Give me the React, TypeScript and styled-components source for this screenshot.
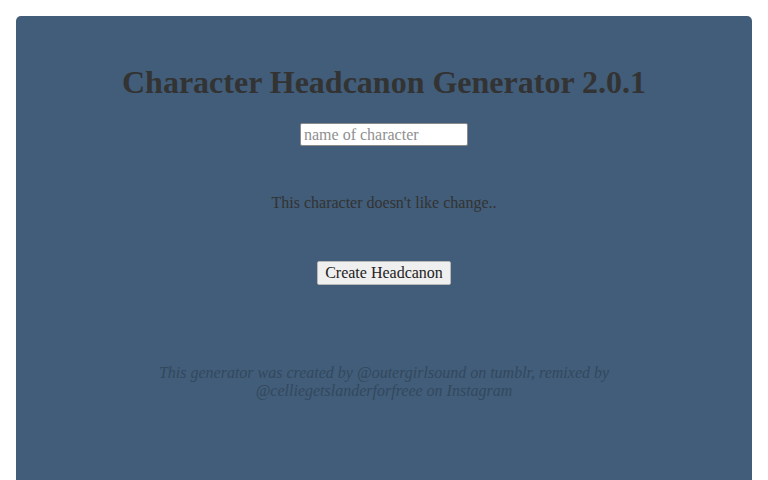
import styled, { createGlobalStyle } from "styled-components";

const GlobalStyle = createGlobalStyle`
  html, body {
    margin: 0;
    padding: 0;
    background: #ffffff;
  }

  body {
    padding: 16px 16px 0;
    font-family: "Liberation Serif", "Times New Roman", serif;
    color: #333333;
  }
`;

const Panel = styled.main`
  box-sizing: border-box;
  background-color: #415d79;
  border-radius: 5px 5px 0 0;
  min-height: calc(100vh - 16px);
  padding: 46px 24px 40px;
  display: flex;
  flex-direction: column;
  align-items: center;
  text-align: center;
`;

const Title = styled.h1`
  margin: 0;
  font-size: 32px;
  line-height: 40px;
  font-weight: bold;
  color: #333333;
`;

const NameInput = styled.input`
  margin-top: 21px;
  width: 168px;
  height: 23px;
  box-sizing: border-box;
  padding: 1px 3px;
  border: 1px solid #8a8a8a;
  border-radius: 2px;
  background: #ffffff;
  font-family: inherit;
  font-size: 16px;
  color: #333333;

  &::placeholder {
    color: #8f8f8f;
  }
`;

const Result = styled.p`
  margin: 48px 0 0;
  font-size: 16px;
  line-height: 18px;
  color: #333333;
`;

const CreateButton = styled.button`
  margin-top: 49px;
  height: 24px;
  padding: 1px 7px;
  background: #efefef;
  border: 1px solid #b8b8b8;
  border-radius: 2px;
  font-family: inherit;
  font-size: 16px;
  color: #222222;
  cursor: pointer;
`;

const Credits = styled.p`
  margin: 79px 0 0;
  width: 470px;
  font-size: 16px;
  line-height: 18px;
  font-style: italic;
  color: #33485e;
`;

export default function App() {
  return (
    <>
      <GlobalStyle />
      <Panel>
        <Title>Character Headcanon Generator 2.0.1</Title>
        <NameInput type="text" placeholder="name of character" />
        <Result>This character doesn't like change..</Result>
        <CreateButton type="button">Create Headcanon</CreateButton>
        <Credits>
          This generator was created by @outergirlsound on tumblr, remixed by
          @celliegetslanderforfreee on Instagram
        </Credits>
      </Panel>
    </>
  );
}
